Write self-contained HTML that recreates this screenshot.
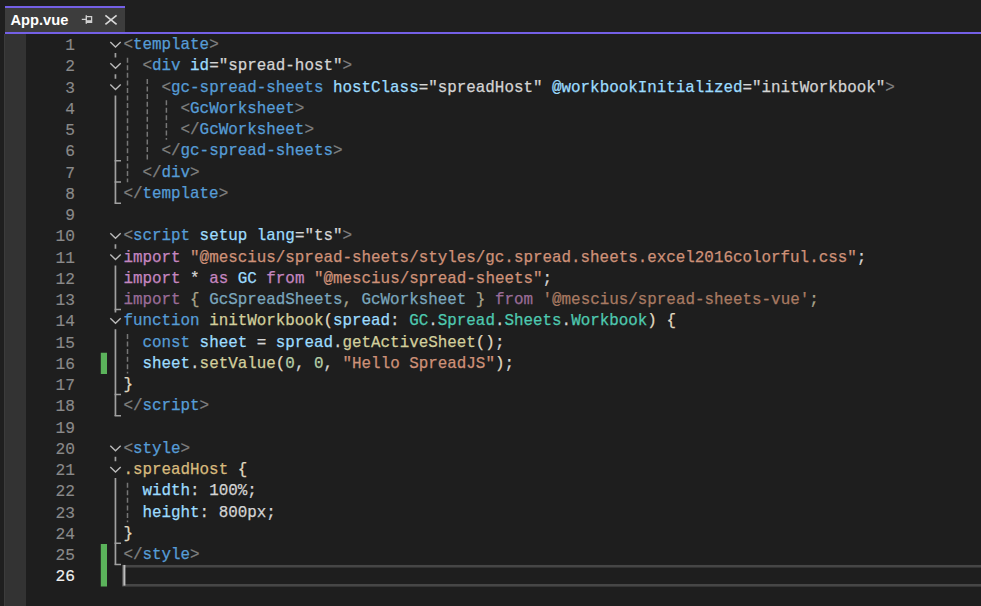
<!DOCTYPE html>
<html><head><meta charset="utf-8"><style>
html,body{margin:0;padding:0}
body{width:981px;height:606px;background:#1f1f1f;overflow:hidden;position:relative;font-family:"Liberation Mono",monospace}
.abs{position:absolute}
.tab{left:5px;top:6px;width:120px;height:24px;background:#3d3d3d;border-top:2px solid #7460e6}
.tabt{left:10.4px;top:10px;transform:scaleY(1.04);transform-origin:0 15px;font-family:"Liberation Sans",sans-serif;font-weight:bold;font-size:14.7px;color:#fff;line-height:20px}
.bar{left:5px;top:32px;width:976px;height:2px;background:#7460e6}
.gut{left:4px;top:34px;width:22px;height:572px;background:#333333;box-shadow:inset 1px 0 0 #3c3c3c}
.ed{left:26px;top:34px;width:955px;height:572px;background:#1e1e1e}
.ln{position:absolute;left:30px;width:45px;text-align:right;font-size:16.2px;transform:scaleY(1.04);transform-origin:0 14px;-webkit-text-stroke:0.15px currentColor;color:#858585;white-space:pre;line-height:21px;height:21px}
.cl{position:absolute;left:123.4px;font-size:15.9px;letter-spacing:-0.012px;-webkit-text-stroke:0.25px currentColor;white-space:pre;line-height:21px;height:21px;color:#d4d4d4}
</style></head><body>
<div class="abs tab"></div>
<div class="abs tabt">App.vue</div>
<div class="abs bar"></div>
<div class="abs gut"></div>
<div class="abs ed"></div>

<div class="ln" style="top:36px;color:#8a8a8a">1</div>
<div class="ln" style="top:57px;color:#8a8a8a">2</div>
<div class="ln" style="top:79px;color:#8a8a8a">3</div>
<div class="ln" style="top:100px;color:#8a8a8a">4</div>
<div class="ln" style="top:121px;color:#8a8a8a">5</div>
<div class="ln" style="top:142px;color:#8a8a8a">6</div>
<div class="ln" style="top:164px;color:#8a8a8a">7</div>
<div class="ln" style="top:185px;color:#8a8a8a">8</div>
<div class="ln" style="top:206px;color:#8a8a8a">9</div>
<div class="ln" style="top:227px;color:#8a8a8a">10</div>
<div class="ln" style="top:249px;color:#8a8a8a">11</div>
<div class="ln" style="top:270px;color:#8a8a8a">12</div>
<div class="ln" style="top:291px;color:#8a8a8a">13</div>
<div class="ln" style="top:312px;color:#8a8a8a">14</div>
<div class="ln" style="top:334px;color:#8a8a8a">15</div>
<div class="ln" style="top:355px;color:#8a8a8a">16</div>
<div class="ln" style="top:376px;color:#8a8a8a">17</div>
<div class="ln" style="top:397px;color:#8a8a8a">18</div>
<div class="ln" style="top:419px;color:#8a8a8a">19</div>
<div class="ln" style="top:440px;color:#8a8a8a">20</div>
<div class="ln" style="top:461px;color:#8a8a8a">21</div>
<div class="ln" style="top:482px;color:#8a8a8a">22</div>
<div class="ln" style="top:504px;color:#8a8a8a">23</div>
<div class="ln" style="top:525px;color:#8a8a8a">24</div>
<div class="ln" style="top:546px;color:#8a8a8a">25</div>
<div class="ln" style="top:567px;color:#f0f0f0">26</div>
<div class="cl" style="top:35px"><span style="color:#808080">&lt;</span><span style="color:#569cd6">template</span><span style="color:#808080">&gt;</span></div>
<div class="cl" style="top:56px"><span style="color:#d4d4d4">  </span><span style="color:#808080">&lt;</span><span style="color:#569cd6">div</span><span style="color:#d4d4d4"> </span><span style="color:#9cdcfe">id</span><span style="color:#d4d4d4">=&quot;spread-host&quot;</span><span style="color:#808080">&gt;</span></div>
<div class="cl" style="top:78px"><span style="color:#d4d4d4">    </span><span style="color:#808080">&lt;</span><span style="color:#569cd6">gc-spread-sheets</span><span style="color:#d4d4d4"> </span><span style="color:#9cdcfe">hostClass</span><span style="color:#d4d4d4">=&quot;spreadHost&quot; </span><span style="color:#9cdcfe">@workbookInitialized</span><span style="color:#d4d4d4">=&quot;initWorkbook&quot;</span><span style="color:#808080">&gt;</span></div>
<div class="cl" style="top:99px"><span style="color:#d4d4d4">      </span><span style="color:#808080">&lt;</span><span style="color:#569cd6">GcWorksheet</span><span style="color:#808080">&gt;</span></div>
<div class="cl" style="top:120px"><span style="color:#d4d4d4">      </span><span style="color:#808080">&lt;/</span><span style="color:#569cd6">GcWorksheet</span><span style="color:#808080">&gt;</span></div>
<div class="cl" style="top:141px"><span style="color:#d4d4d4">    </span><span style="color:#808080">&lt;/</span><span style="color:#569cd6">gc-spread-sheets</span><span style="color:#808080">&gt;</span></div>
<div class="cl" style="top:163px"><span style="color:#d4d4d4">  </span><span style="color:#808080">&lt;/</span><span style="color:#569cd6">div</span><span style="color:#808080">&gt;</span></div>
<div class="cl" style="top:184px"><span style="color:#808080">&lt;/</span><span style="color:#569cd6">template</span><span style="color:#808080">&gt;</span></div>
<div class="cl" style="top:226px"><span style="color:#808080">&lt;</span><span style="color:#569cd6">script</span><span style="color:#d4d4d4"> </span><span style="color:#9cdcfe">setup</span><span style="color:#d4d4d4"> </span><span style="color:#9cdcfe">lang</span><span style="color:#d4d4d4">=&quot;ts&quot;</span><span style="color:#808080">&gt;</span></div>
<div class="cl" style="top:248px"><span style="color:#c586c0">import</span><span style="color:#d4d4d4"> </span><span style="color:#ce9178">&quot;@mescius/spread-sheets/styles/gc.spread.sheets.excel2016colorful.css&quot;</span><span style="color:#d4d4d4">;</span></div>
<div class="cl" style="top:269px"><span style="color:#c586c0">import</span><span style="color:#d4d4d4"> * </span><span style="color:#c586c0">as</span><span style="color:#d4d4d4"> </span><span style="color:#9cdcfe">GC</span><span style="color:#d4d4d4"> </span><span style="color:#c586c0">from</span><span style="color:#d4d4d4"> </span><span style="color:#ce9178">&quot;@mescius/spread-sheets&quot;</span><span style="color:#d4d4d4">;</span></div>
<div class="cl" style="top:290px"><span style="color:#9a6c97">import</span><span style="color:#d4d4d4"> </span><span style="color:#a8a38a">{</span><span style="color:#d4d4d4"> </span><span style="color:#7aa6bd">GcSpreadSheets</span><span style="color:#a8a38a">,</span><span style="color:#d4d4d4"> </span><span style="color:#7aa6bd">GcWorksheet</span><span style="color:#d4d4d4"> </span><span style="color:#a8a38a">}</span><span style="color:#d4d4d4"> </span><span style="color:#9a6c97">from</span><span style="color:#d4d4d4"> </span><span style="color:#a87a62">&#x27;@mescius/spread-sheets-vue&#x27;</span><span style="color:#a8a38a">;</span></div>
<div class="cl" style="top:311px"><span style="color:#569cd6">function</span><span style="color:#d4d4d4"> </span><span style="color:#d2cf9c">initWorkbook</span><span style="color:#e0d9c0">(</span><span style="color:#9cdcfe">spread</span><span style="color:#d4d4d4">: </span><span style="color:#4ec9b0">GC</span><span style="color:#d4d4d4">.</span><span style="color:#4ec9b0">Spread</span><span style="color:#d4d4d4">.</span><span style="color:#4ec9b0">Sheets</span><span style="color:#d4d4d4">.</span><span style="color:#4ec9b0">Workbook</span><span style="color:#e0d9c0">)</span><span style="color:#d4d4d4"> </span><span style="color:#e0d9c0">{</span></div>
<div class="cl" style="top:333px"><span style="color:#d4d4d4">  </span><span style="color:#569cd6">const</span><span style="color:#d4d4d4"> </span><span style="color:#9cdcfe">sheet</span><span style="color:#d4d4d4"> = </span><span style="color:#9cdcfe">spread</span><span style="color:#d4d4d4">.</span><span style="color:#d2cf9c">getActiveSheet</span><span style="color:#e0d9c0">()</span><span style="color:#d4d4d4">;</span></div>
<div class="cl" style="top:354px"><span style="color:#d4d4d4">  </span><span style="color:#9cdcfe">sheet</span><span style="color:#d4d4d4">.</span><span style="color:#d2cf9c">setValue</span><span style="color:#e0d9c0">(</span><span style="color:#b5cea8">0</span><span style="color:#d4d4d4">, </span><span style="color:#b5cea8">0</span><span style="color:#d4d4d4">, </span><span style="color:#ce9178">&quot;Hello SpreadJS&quot;</span><span style="color:#e0d9c0">)</span><span style="color:#d4d4d4">;</span></div>
<div class="cl" style="top:375px"><span style="color:#e0d9c0">}</span></div>
<div class="cl" style="top:396px"><span style="color:#808080">&lt;/</span><span style="color:#569cd6">script</span><span style="color:#808080">&gt;</span></div>
<div class="cl" style="top:439px"><span style="color:#808080">&lt;</span><span style="color:#569cd6">style</span><span style="color:#808080">&gt;</span></div>
<div class="cl" style="top:460px"><span style="color:#d7ba7d">.spreadHost</span><span style="color:#d4d4d4"> </span><span style="color:#e0d9c0">{</span></div>
<div class="cl" style="top:481px"><span style="color:#d4d4d4">  </span><span style="color:#9cdcfe">width</span><span style="color:#d4d4d4">: </span><span style="color:#d4d4d4">100%</span><span style="color:#d4d4d4">;</span></div>
<div class="cl" style="top:503px"><span style="color:#d4d4d4">  </span><span style="color:#9cdcfe">height</span><span style="color:#d4d4d4">: </span><span style="color:#d4d4d4">800px</span><span style="color:#d4d4d4">;</span></div>
<div class="cl" style="top:524px"><span style="color:#e0d9c0">}</span></div>
<div class="cl" style="top:545px"><span style="color:#808080">&lt;/</span><span style="color:#569cd6">style</span><span style="color:#808080">&gt;</span></div>
<svg class="abs" style="left:0;top:0" width="981" height="606" viewBox="0 0 981 606">
<polyline points="110.3,41.90 115.5,47.10 120.7,41.90" fill="none" stroke="#bababa" stroke-width="1.35"/>
<polyline points="110.3,63.15 115.5,68.35 120.7,63.15" fill="none" stroke="#bababa" stroke-width="1.35"/>
<polyline points="110.3,84.40 115.5,89.60 120.7,84.40" fill="none" stroke="#bababa" stroke-width="1.35"/>
<polyline points="110.3,233.15 115.5,238.35 120.7,233.15" fill="none" stroke="#bababa" stroke-width="1.35"/>
<polyline points="110.3,254.40 115.5,259.60 120.7,254.40" fill="none" stroke="#bababa" stroke-width="1.35"/>
<polyline points="110.3,318.15 115.5,323.35 120.7,318.15" fill="none" stroke="#bababa" stroke-width="1.35"/>
<polyline points="110.3,445.65 115.5,450.85 120.7,445.65" fill="none" stroke="#bababa" stroke-width="1.35"/>
<polyline points="110.3,466.90 115.5,472.10 120.7,466.90" fill="none" stroke="#bababa" stroke-width="1.35"/>
<rect x="114.6" y="53.00" width="1.7" height="4.50" fill="#a0a0a0"/>
<rect x="114.6" y="74.25" width="1.7" height="4.50" fill="#a0a0a0"/>
<rect x="114.6" y="95.50" width="1.7" height="108.00" fill="#a0a0a0"/>
<rect x="114.6" y="244.25" width="1.7" height="4.50" fill="#a0a0a0"/>
<rect x="114.6" y="265.50" width="1.7" height="47.00" fill="#a0a0a0"/>
<rect x="114.6" y="329.25" width="1.7" height="86.75" fill="#a0a0a0"/>
<rect x="114.6" y="456.75" width="1.7" height="4.50" fill="#a0a0a0"/>
<rect x="114.6" y="478.00" width="1.7" height="86.75" fill="#a0a0a0"/>
<rect x="114.6" y="160.00" width="6.4" height="1.5" fill="#a0a0a0"/>
<rect x="114.6" y="181.25" width="6.4" height="1.5" fill="#a0a0a0"/>
<rect x="114.6" y="202.50" width="6.4" height="1.5" fill="#a0a0a0"/>
<rect x="114.6" y="308.75" width="6.4" height="1.5" fill="#a0a0a0"/>
<rect x="114.6" y="393.75" width="6.4" height="1.5" fill="#a0a0a0"/>
<rect x="114.6" y="415.00" width="6.4" height="1.5" fill="#a0a0a0"/>
<rect x="114.6" y="542.50" width="6.4" height="1.5" fill="#a0a0a0"/>
<rect x="114.6" y="563.75" width="6.4" height="1.5" fill="#a0a0a0"/>
<line x1="127.50" y1="57.75" x2="127.50" y2="182.25" stroke="#767676" stroke-width="1.5" stroke-dasharray="5 2.55"/>
<line x1="147.30" y1="79.00" x2="147.30" y2="161.00" stroke="#767676" stroke-width="1.5" stroke-dasharray="5 2.55"/>
<line x1="166.40" y1="100.25" x2="166.40" y2="139.75" stroke="#767676" stroke-width="1.5" stroke-dasharray="5 2.55"/>
<line x1="127.50" y1="334.00" x2="127.50" y2="373.50" stroke="#767676" stroke-width="1.5" stroke-dasharray="5 2.55"/>
<line x1="127.50" y1="482.75" x2="127.50" y2="522.25" stroke="#767676" stroke-width="1.5" stroke-dasharray="5 2.55"/>
<rect x="100.8" y="352.75" width="6.2" height="21.25" fill="#5bb35b"/>
<rect x="100.8" y="544.00" width="6.2" height="42.50" fill="#5bb35b"/>
<rect x="123.5" y="566.25" width="900" height="19.05" fill="none" stroke="#464646" stroke-width="2.6"/>
<rect x="122.3" y="564.95" width="1.2" height="21.25" fill="#5a5a5a"/>
<rect x="123.4" y="564.95" width="2" height="20.65" fill="#bebebe"/>
<path d="M81.8 19.4 H86.3 M86.3 15.2 V23.7" stroke="#d0d0d0" stroke-width="1.4" fill="none"/>
<path d="M86.8 16.6 H91.6 V22.4 H86.8" stroke="#d0d0d0" stroke-width="1.3" fill="none"/>
<rect x="86.8" y="20.2" width="4.8" height="2.2" fill="#d0d0d0"/>
<path d="M105.4 15.4 L116.6 24.4 M116.6 15.4 L105.4 24.4" stroke="#d8d8d8" stroke-width="1.7" fill="none"/>
</svg>
</body></html>
